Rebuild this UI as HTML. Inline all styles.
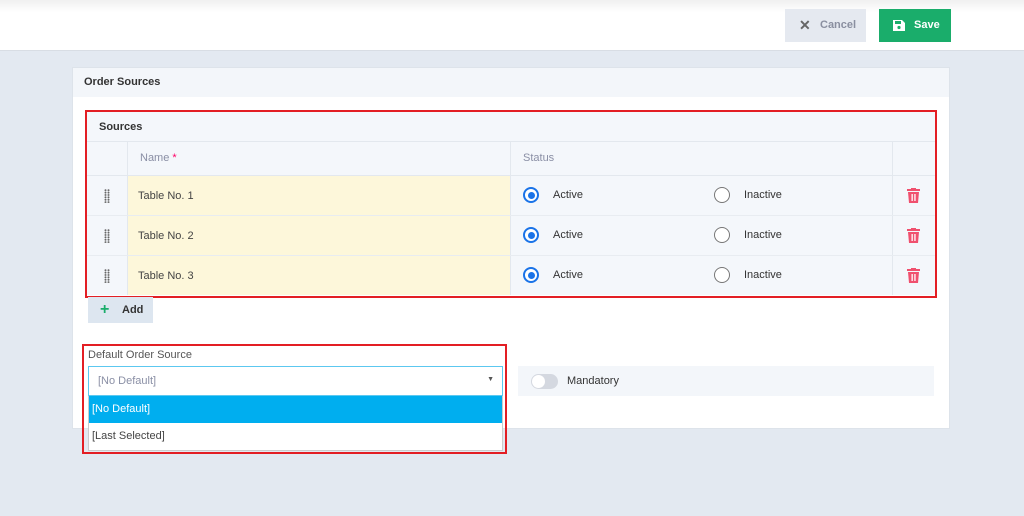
<!DOCTYPE html>
<html><head><style>
*{box-sizing:border-box;margin:0;padding:0}
body{width:1024px;height:516px;background:#e3e9f1;font-family:"Liberation Sans",sans-serif;position:relative;overflow:hidden;font-size:11px;color:#444}
.a{position:absolute}
.radio{position:absolute;width:16px;height:16px;border-radius:50%;border:1.5px solid #777;background:#fff}
.radio.on{border:2px solid #1a73e8}
.radio.on::after{content:"";position:absolute;left:2.5px;top:2.5px;width:7px;height:7px;border-radius:50%;background:#1a73e8}
</style></head><body>
<div class="a" style="left:0;top:0;width:1024px;height:51px;background:#fff;border-bottom:1px solid #d8dde4"></div>
<div class="a" style="left:0;top:0;width:1024px;height:12px;background:linear-gradient(#f0f0f0,#fff)"></div>
<div class="a" style="left:785px;top:9px;width:81px;height:33px;background:#e5e9f0;color:#8a8fa0;font-weight:bold;line-height:33px;font-size:11px"><span style="position:absolute;left:14px;font-size:14px;color:#666">✕</span><span style="position:absolute;left:35px">Cancel</span></div>
<div class="a" style="left:879px;top:9px;width:72px;height:33px;background:#1aad6b;color:#fff;font-weight:bold;line-height:33px">
<svg class="a" style="left:14px;top:10px" width="12" height="12" viewBox="0 0 12 12"><path d="M0 1h9l3 3v8H0z" fill="#fff"/><rect x="2" y="2" width="6" height="3" fill="#1aad6b"/><circle cx="6" cy="8.5" r="1.6" fill="#1aad6b"/></svg>
<span style="position:absolute;left:35px">Save</span></div>

<div class="a" style="left:72px;top:67px;width:878px;height:362px;background:#fff;border:1px solid #dde3ea"></div>
<div class="a" style="left:73px;top:68px;width:876px;height:29px;background:#f3f6fa;font-weight:bold;color:#333;padding:8px 0 0 11px">Order Sources</div>

<div class="a" style="left:87px;top:112px;width:848px;height:183px;background:#f4f7fb"></div>
<div class="a" style="left:99px;top:121px;font-weight:bold;color:#333">Sources</div>
<div class="a" style="left:87px;top:141px;width:848px;height:1px;background:#e3e8ee"></div>
<div class="a" style="left:127px;top:141px;width:1px;height:154px;background:#e3e8ee"></div>
<div class="a" style="left:510px;top:141px;width:1px;height:154px;background:#e3e8ee"></div>
<div class="a" style="left:892px;top:141px;width:1px;height:154px;background:#e3e8ee"></div>
<div class="a" style="left:140px;top:152px;color:#8a8fa5">Name <span style="color:#f06">*</span></div>
<div class="a" style="left:523px;top:152px;color:#8a8fa5">Status</div>

<div class="a" style="left:128px;top:175px;width:382px;height:120px;background:#fdf7da"></div>
<div class="a" style="left:87px;top:175px;width:848px;height:1px;background:#e3e8ee"></div>
<div class="a" style="left:87px;top:215px;width:848px;height:1px;background:#e8ecf1"></div>
<div class="a" style="left:87px;top:255px;width:848px;height:1px;background:#e8ecf1"></div>

<div class="a" style="top:189px;left:104px;width:6px;height:14px;background:radial-gradient(circle,#666 0.8px,transparent 1.1px) 0 0/3px 2.4px"></div>
<div class="a" style="top:229px;left:104px;width:6px;height:14px;background:radial-gradient(circle,#666 0.8px,transparent 1.1px) 0 0/3px 2.4px"></div>
<div class="a" style="top:269px;left:104px;width:6px;height:14px;background:radial-gradient(circle,#666 0.8px,transparent 1.1px) 0 0/3px 2.4px"></div>

<div class="a" style="left:138px;top:190px">Table No. 1</div>
<div class="a" style="left:138px;top:230px">Table No. 2</div>
<div class="a" style="left:138px;top:270px">Table No. 3</div>

<div class="radio on" style="left:523px;top:187px"></div><div class="a" style="left:553px;top:189px;color:#333">Active</div>
<div class="radio" style="left:714px;top:187px"></div><div class="a" style="left:744px;top:189px;color:#333">Inactive</div>
<div class="radio on" style="left:523px;top:227px"></div><div class="a" style="left:553px;top:229px;color:#333">Active</div>
<div class="radio" style="left:714px;top:227px"></div><div class="a" style="left:744px;top:229px;color:#333">Inactive</div>
<div class="radio on" style="left:523px;top:267px"></div><div class="a" style="left:553px;top:269px;color:#333">Active</div>
<div class="radio" style="left:714px;top:267px"></div><div class="a" style="left:744px;top:269px;color:#333">Inactive</div>

<svg class="a" style="left:907px;top:188px" width="13" height="15" viewBox="0 0 13 15"><rect x="0" y="1" width="13" height="2" fill="#f0506e"/><rect x="4" y="0" width="5" height="2" fill="#f0506e"/><path d="M1 4h11l-1 11H2z" fill="#f0506e"/><rect x="4.5" y="6" width="1.3" height="7" fill="#fff"/><rect x="7.3" y="6" width="1.3" height="7" fill="#fff"/></svg>
<svg class="a" style="left:907px;top:228px" width="13" height="15" viewBox="0 0 13 15"><rect x="0" y="1" width="13" height="2" fill="#f0506e"/><rect x="4" y="0" width="5" height="2" fill="#f0506e"/><path d="M1 4h11l-1 11H2z" fill="#f0506e"/><rect x="4.5" y="6" width="1.3" height="7" fill="#fff"/><rect x="7.3" y="6" width="1.3" height="7" fill="#fff"/></svg>
<svg class="a" style="left:907px;top:268px" width="13" height="15" viewBox="0 0 13 15"><rect x="0" y="1" width="13" height="2" fill="#f0506e"/><rect x="4" y="0" width="5" height="2" fill="#f0506e"/><path d="M1 4h11l-1 11H2z" fill="#f0506e"/><rect x="4.5" y="6" width="1.3" height="7" fill="#fff"/><rect x="7.3" y="6" width="1.3" height="7" fill="#fff"/></svg>

<div class="a" style="left:85px;top:110px;width:852px;height:188px;border:2px solid #e31e24"></div>

<div class="a" style="left:88px;top:297px;width:65px;height:26px;background:#dde6f0;font-weight:bold;color:#333;line-height:26px"><span style="position:absolute;left:12px;color:#1aad6b;font-size:16px">+</span><span style="position:absolute;left:34px">Add</span></div>

<div class="a" style="left:88px;top:349px;color:#555">Default Order Source</div>
<div class="a" style="left:88px;top:366px;width:415px;height:30px;background:#fff;border:1px solid #5cc8f0;color:#8a8fa5;padding:8px 0 0 9px">[No Default]<span style="position:absolute;right:8px;top:9px;font-size:7px;color:#555">▼</span></div>
<div class="a" style="left:88px;top:396px;width:415px;height:55px;background:#fff;border:1px solid #ccc"></div>
<div class="a" style="left:89px;top:396px;width:413px;height:27px;background:#00aeef;color:#fff;padding:7px 0 0 3px">[No Default]</div>
<div class="a" style="left:92px;top:430px;color:#444">[Last Selected]</div>
<div class="a" style="left:82px;top:344px;width:425px;height:110px;border:2px solid #e31e24"></div>

<div class="a" style="left:518px;top:366px;width:416px;height:30px;background:#f3f6fa"></div>
<div class="a" style="left:531px;top:374px;width:27px;height:15px;border-radius:8px;background:#d4d8e0"><div style="position:absolute;left:1px;top:1px;width:13px;height:13px;border-radius:50%;background:#fff"></div></div>
<div class="a" style="left:567px;top:375px;color:#333">Mandatory</div>
</body></html>
